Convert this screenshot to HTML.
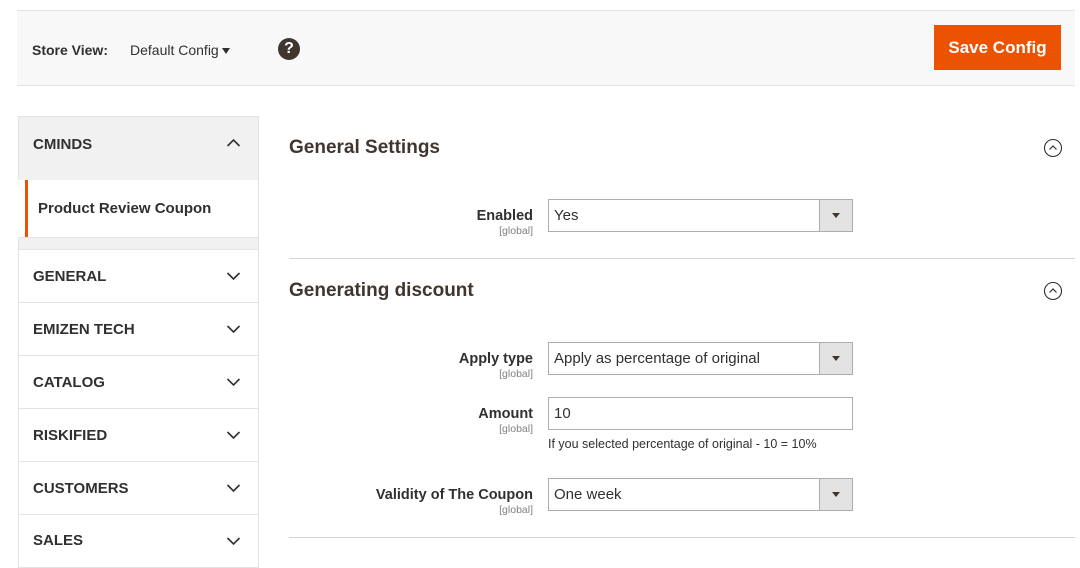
<!DOCTYPE html>
<html><head><style>
*{margin:0;padding:0;box-sizing:border-box}
body{width:1080px;height:543px;overflow:hidden;background:#fff;font-family:"Liberation Sans",sans-serif;color:#303030;position:relative}
.a{position:absolute}
.hdr{left:17px;top:10px;width:1058px;height:76px;background:#f8f8f8;border-top:1px solid #e3e3e3;border-bottom:1px solid #e3e3e3}
.btn{left:934px;top:25px;width:127px;height:45px;background:#eb5202;color:#fff;font-weight:bold;font-size:17px;text-align:center;line-height:45px}
.side{left:18px;width:241px;border:1px solid #e3e3e3;background:#fff}
.it{font-weight:bold;font-size:15px;color:#303030}
.lab{width:245px;text-align:right;font-weight:bold;font-size:14.5px;left:288px}
.gl{width:245px;text-align:right;font-size:10.5px;color:#808080;left:288px}
.sel{left:548px;width:305px;height:33px;border:1px solid #adadad;background:#fff;font-size:15px;line-height:31px;padding-left:5px}
.arr{position:absolute;right:0;top:0;width:33px;height:31px;background:#e3e3e3;border-left:1px solid #adadad}
.arr:after{content:"";position:absolute;left:12px;top:13px;border-left:4px solid transparent;border-right:4px solid transparent;border-top:5px solid #41362f}
.h{left:289px;font-size:19px;font-weight:bold;color:#41362f}
.hr{left:289px;width:786px;height:1px;background:#d6d6d6}
</style></head><body>
<div class="a hdr"></div>
<div class="a" style="left:32px;top:42px;font-size:14px;font-weight:bold">Store View:</div>
<div class="a" style="left:130px;top:42px;font-size:14px">Default Config</div>
<div class="a" style="left:222px;top:48px;border-left:4.5px solid transparent;border-right:4.5px solid transparent;border-top:6px solid #303030"></div>
<div class="a" style="left:278px;top:38px;width:22px;height:22px;border-radius:50%;background:#41362f;color:#fff;font-weight:bold;font-size:16px;text-align:center;line-height:22px">?</div>
<div class="a btn">Save Config</div>

<div class="a side" style="top:116px;height:65px;background:#f1f1f1"></div>
<div class="a it" style="left:33px;top:136px">CMINDS</div>
<svg class="a" style="left:226px;top:138px" width="15" height="10"><path d="M1.5 8L7.5 2L13.5 8" fill="none" stroke="#303030" stroke-width="1.6"/></svg>
<div class="a" style="left:18px;top:180px;width:241px;height:57px;background:#fff;border-right:1px solid #e3e3e3"></div>
<div class="a" style="left:25px;top:180px;width:3px;height:57px;background:#eb5202"></div>
<div class="a" style="left:38px;top:200px;font-size:15px;font-weight:bold;color:#303030">Product Review Coupon</div>
<div class="a" style="left:18px;top:237px;width:241px;height:13px;background:#f1f1f1;border:1px solid #e3e3e3;border-bottom:none"></div>

<div class="a side" style="top:249px;height:54px"></div><div class="a it" style="left:33px;top:268px">GENERAL</div>
<div class="a side" style="top:302px;height:54px"></div><div class="a it" style="left:33px;top:321px">EMIZEN TECH</div>
<div class="a side" style="top:355px;height:54px"></div><div class="a it" style="left:33px;top:374px">CATALOG</div>
<div class="a side" style="top:408px;height:54px"></div><div class="a it" style="left:33px;top:427px">RISKIFIED</div>
<div class="a side" style="top:461px;height:54px"></div><div class="a it" style="left:33px;top:480px">CUSTOMERS</div>
<div class="a side" style="top:514px;height:54px"></div><div class="a it" style="left:33px;top:532px">SALES</div>
<svg class="a" style="left:226px;top:270px" width="15" height="280"><g fill="none" stroke="#303030" stroke-width="1.6"><path d="M1.5 3L7.5 9L13.5 3"/><path d="M1.5 56L7.5 62L13.5 56"/><path d="M1.5 109L7.5 115L13.5 109"/><path d="M1.5 162L7.5 168L13.5 162"/><path d="M1.5 215L7.5 221L13.5 215"/><path d="M1.5 268L7.5 274L13.5 268"/></g></svg>

<div class="a h" style="top:137px">General Settings</div>
<svg class="a" style="left:1043px;top:138px" width="20" height="20"><circle cx="10" cy="10" r="8.5" fill="none" stroke="#303030" stroke-width="1.1"/><path d="M6.5 11.5L10 8L13.5 11.5" fill="none" stroke="#303030" stroke-width="1.2"/></svg>
<div class="a lab" style="top:208px">Enabled</div><div class="a gl" style="top:225px">[global]</div>
<div class="a sel" style="top:199px">Yes<div class="arr"></div></div>
<div class="a hr" style="top:258px"></div>

<div class="a h" style="top:280px">Generating discount</div>
<svg class="a" style="left:1043px;top:281px" width="20" height="20"><circle cx="10" cy="10" r="8.5" fill="none" stroke="#303030" stroke-width="1.1"/><path d="M6.5 11.5L10 8L13.5 11.5" fill="none" stroke="#303030" stroke-width="1.2"/></svg>
<div class="a lab" style="top:351px">Apply type</div><div class="a gl" style="top:368px">[global]</div>
<div class="a sel" style="top:342px">Apply as percentage of original<div class="arr"></div></div>
<div class="a lab" style="top:406px">Amount</div><div class="a gl" style="top:423px">[global]</div>
<div class="a sel" style="top:397px">10</div>
<div class="a" style="left:548px;top:437px;font-size:12.5px">If you selected percentage of original - 10 = 10%</div>
<div class="a lab" style="top:487px">Validity of The Coupon</div><div class="a gl" style="top:504px">[global]</div>
<div class="a sel" style="top:478px">One week<div class="arr"></div></div>
<div class="a hr" style="top:537px"></div>
</body></html>
